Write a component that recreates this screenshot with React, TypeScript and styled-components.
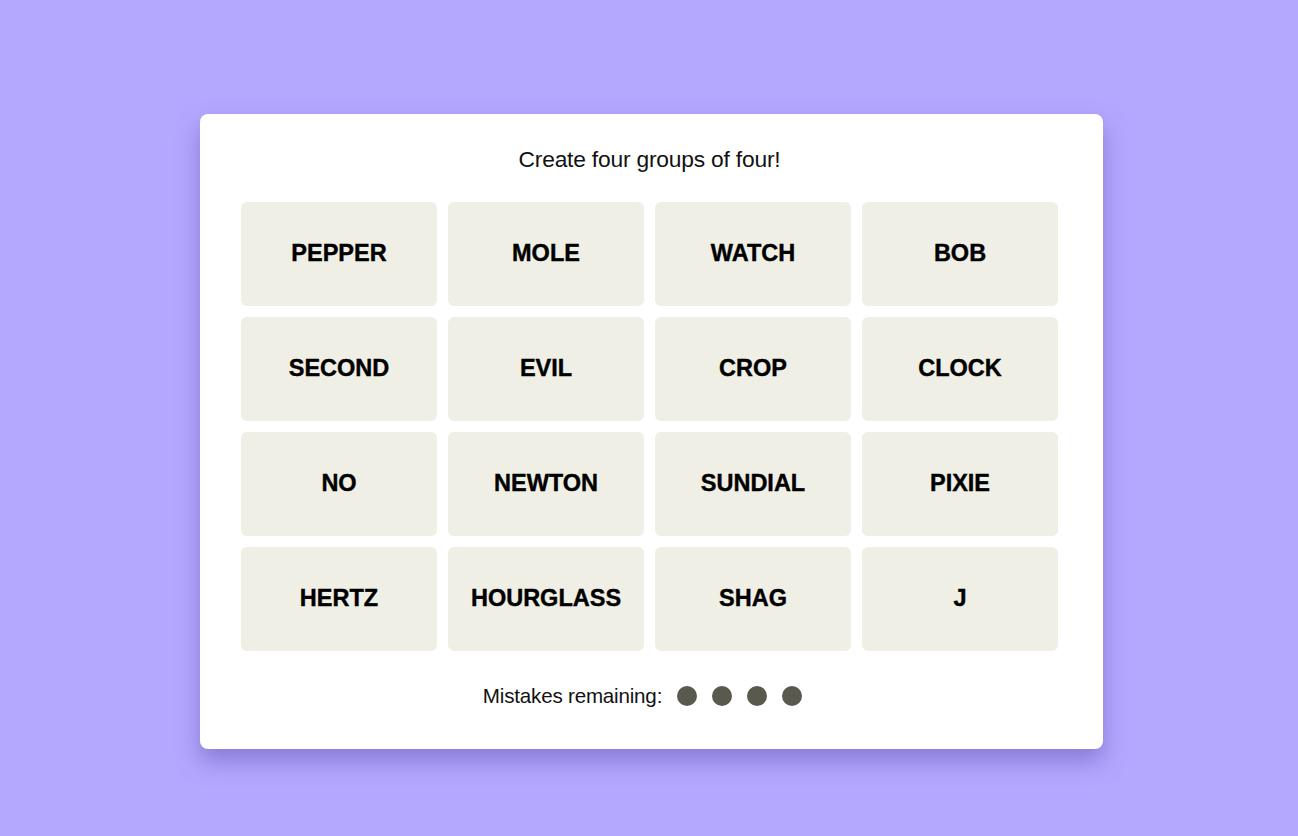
import React from "react";
import styled, { createGlobalStyle } from "styled-components";

const Global = createGlobalStyle`
  html, body { margin: 0; padding: 0; }
  body { background: #b3a7fe; font-family: "Liberation Sans", Arial, sans-serif; }
`;

const Page = styled.div`
  width: 1298px;
  height: 836px;
  box-sizing: border-box;
  padding: 114px 0 0 200px;
  overflow: hidden;
`;

const Card = styled.div`
  width: 903px;
  box-sizing: border-box;
  background: #ffffff;
  border-radius: 8px;
  padding: 32px 45px 41px 41px;
  box-shadow: 0 12px 22px rgba(110, 95, 190, 0.6);
  display: flex;
  flex-direction: column;
  align-items: stretch;
`;

const Title = styled.div`
  height: 26px;
  line-height: 26px;
  text-align: center;
  font-size: 22.8px;
  color: #121212;
  letter-spacing: -0.2px;
`;

const Grid = styled.div`
  margin-top: 30px;
  display: grid;
  grid-template-columns: repeat(4, 196px);
  grid-auto-rows: 104px;
  gap: 11px;
`;

const Tile = styled.div`
  background: #efefe6;
  border-radius: 6px;
  display: flex;
  align-items: center;
  justify-content: center;
  padding-bottom: 2px;
  box-sizing: border-box;
  font-weight: 700;
  font-size: 23.5px;
  letter-spacing: 0px;
  color: #000;
  -webkit-text-stroke: 0.4px #000;
  text-transform: uppercase;
`;

const Footer = styled.div`
  margin-top: 33px;
  height: 24px;
  display: flex;
  align-items: center;
  justify-content: center;
  gap: 15px;
  padding-right: 14px;
`;

const Label = styled.span`
  font-size: 20.6px;
  color: #121212;
  letter-spacing: -0.2px;
`;

const Dots = styled.div`
  display: flex;
  gap: 15px;
`;

const Dot = styled.span`
  width: 20px;
  height: 20px;
  border-radius: 50%;
  background: #5a594e;
`;

const words = [
  "PEPPER", "MOLE", "WATCH", "BOB",
  "SECOND", "EVIL", "CROP", "CLOCK",
  "NO", "NEWTON", "SUNDIAL", "PIXIE",
  "HERTZ", "HOURGLASS", "SHAG", "J",
];

export default function App() {
  return (
    <>
      <Global />
      <Page>
        <Card>
          <Title>Create four groups of four!</Title>
          <Grid>
            {words.map((w) => (
              <Tile key={w}>{w}</Tile>
            ))}
          </Grid>
          <Footer>
            <Label>Mistakes remaining:</Label>
            <Dots>
              {[0, 1, 2, 3].map((i) => (
                <Dot key={i} />
              ))}
            </Dots>
          </Footer>
        </Card>
      </Page>
    </>
  );
}
